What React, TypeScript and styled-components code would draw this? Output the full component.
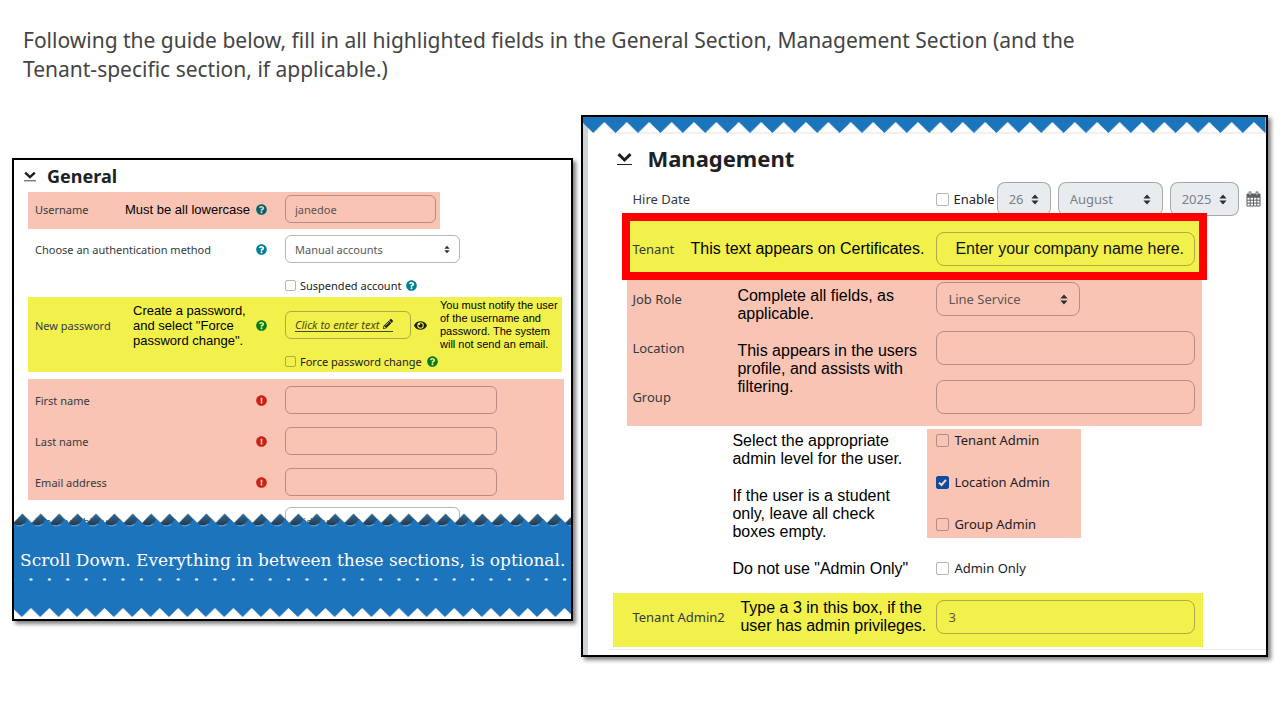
import React, { useId } from "react";
import styled, { createGlobalStyle, css } from "styled-components";
import {
  FaExclamationCircle,
  FaEye,
  FaPencilAlt,
  FaQuestionCircle,
} from "react-icons/fa";

const color = {
  salmon: "#f9c4b3",
  yellow: "#f2f04b",
  red: "#ff0000",
  blue: "#1c74bd",
  ink: "#1d2125",
  label: "#343a40",
  outline: "rgba(50, 40, 60, 0.35)",
  stripe: "#ced4d8",
};

const GlobalStyle = createGlobalStyle`
  * { box-sizing: border-box; }
  body {
    margin: 0;
    background: #fff;
    font-family: "Noto Sans", "Open Sans", sans-serif;
    color: ${color.label};
  }
  h1, h2, p { margin: 0; }
  input, select, button { font: inherit; color: inherit; }
`;

const Page = styled.main`
  padding: 26px 12px 24px;
`;

const Intro = styled.h1`
  padding-left: 11px;
  max-width: 1100px;
  font-size: 21px;
  font-weight: 400;
  line-height: 29px;
  color: #444;
`;

const Panels = styled.div`
  display: flex;
  align-items: flex-start;
  gap: 8px;
  margin-top: 31px;
`;

const Panel = styled.section<{ $grow: number; $drop?: number; $size: number }>`
  flex: ${(p) => p.$grow} 1 0;
  min-width: 0;
  margin-top: ${(p) => p.$drop ?? 0}px;
  border: 2px solid #000;
  background: #fff;
  box-shadow: 3px 3px 4px rgba(0, 0, 0, 0.5);
  font-size: ${(p) => p.$size}px;
`;

const StripedBody = styled.div`
  border-left: 5px solid ${color.stripe};
  padding-bottom: 5px;
`;

const Heading = styled.h2<{ $large?: boolean }>`
  display: flex;
  align-items: center;
  gap: ${(p) => (p.$large ? 15 : 11)}px;
  height: ${(p) => (p.$large ? 48 : 32)}px;
  padding-left: ${(p) => (p.$large ? 29 : 10)}px;
  font-size: ${(p) => (p.$large ? 22 : 18)}px;
  font-weight: 700;
  color: ${color.ink};
`;

const Band = styled.div<{ $fill?: string; $right?: number }>`
  margin-left: 14px;
  margin-right: ${(p) => p.$right ?? 7}px;
  padding-left: 7px;
  background: ${(p) => p.$fill ?? "transparent"};
`;

const UserBand = styled(Band)`
  padding-top: 3px;
  padding-bottom: 6px;
`;

const AuthBand = styled(Band)`
  padding-top: 6px;
  padding-bottom: 3px;
  display: grid;
  gap: 13px;
`;

const NamesBand = styled(Band)`
  display: grid;
  gap: 13px;
  margin-top: 7px;
  padding-top: 7px;
  padding-bottom: 4px;
`;

const PasswordBand = styled(Band)`
  padding-top: 1px;
  padding-bottom: 2px;
`;

const CutBand = styled(Band)`
  height: 23px;
  padding-top: 7px;
`;

const Row = styled.div<{ $height?: number }>`
  display: grid;
  grid-template-columns: 98px 117px 17px 18px 1fr;
  align-items: center;
  height: ${(p) => p.$height ?? 28}px;
`;

const Label = styled.label<{ $wide?: boolean }>`
  grid-column: 1 / ${(p) => (p.$wide ? 3 : 2)};
  white-space: nowrap;
`;

const Note = styled.p<{ $small?: boolean; $end?: boolean }>`
  font-family: "Liberation Sans", Arial, sans-serif;
  font-size: ${(p) => (p.$small ? 11 : 13)}px;
  line-height: ${(p) => (p.$small ? 13 : 15)}px;
  color: #000;
  white-space: nowrap;
  ${(p) =>
    p.$end &&
    css`
      grid-column: 2;
      justify-self: end;
    `}
`;

const Status = styled.span<{ $tone: string }>`
  grid-column: 3;
  justify-self: end;
  display: flex;
  font-size: 11px;
  color: ${(p) => p.$tone};
`;

const Controls = styled.div<{ $gap?: number }>`
  grid-column: 5;
  display: flex;
  align-items: center;
  gap: ${(p) => p.$gap ?? 0}px;
`;

const TextField = styled.input<{ $width?: number; $tall?: boolean; $note?: boolean }>`
  width: ${(p) => (p.$width ? `${p.$width}px` : "100%")};
  height: ${(p) => (p.$tall ? 34 : 28)}px;
  padding: 0 ${(p) => (p.$tall ? 11 : 9)}px;
  border: 1px solid ${color.outline};
  border-radius: ${(p) => (p.$tall ? 8 : 6)}px;
  background: transparent;
  color: #5a5553;
  outline: none;
  ${(p) =>
    p.$note &&
    css`
      padding: 0 10px;
      font-family: "Liberation Sans", Arial, sans-serif;
      font-size: 16px;
      color: #111;
      text-align: right;
    `}
`;

const SelectWrap = styled.span<{ $width: number; $tall?: boolean; $disabled?: boolean }>`
  display: flex;
  align-items: center;
  flex: none;
  position: relative;
  width: ${(p) => p.$width}px;
  height: ${(p) => (p.$tall ? 34 : 28)}px;
  border: 1px solid ${color.outline};
  border-radius: ${(p) => (p.$tall ? 8 : 6)}px;
  background: ${(p) => (p.$disabled ? "#e9ecef" : "transparent")};
  select {
    appearance: none;
    width: 100%;
    height: 100%;
    padding: 0 0 0 ${(p) => (p.$tall ? 11 : 9)}px;
    border: 0;
    background: transparent;
    opacity: 1;
    color: ${(p) => (p.$disabled ? "#7a8087" : "#5a5759")};
    outline: none;
  }
  svg {
    position: absolute;
    right: ${(p) => (p.$tall ? 11 : 9)}px;
    pointer-events: none;
  }
`;

const CheckLabel = styled.label<{ $gap?: number }>`
  display: flex;
  align-items: center;
  gap: ${(p) => p.$gap ?? 5}px;
  height: 18px;
  white-space: nowrap;
  color: ${color.ink};
`;

const Tick = styled.input<{ $size?: number }>`
  appearance: none;
  flex: none;
  width: ${(p) => p.$size ?? 13}px;
  height: ${(p) => p.$size ?? 13}px;
  margin: 0;
  border: 1px solid ${color.outline};
  border-radius: 2px;
  &:checked {
    border-color: #0f4c9c;
    background: #0f4c9c;
  }
`;

const TickBox = styled.span`
  display: flex;
  position: relative;
  svg {
    position: absolute;
    inset: 0;
    pointer-events: none;
  }
`;

const EnterText = styled.button`
  display: flex;
  align-items: center;
  width: 126px;
  height: 28px;
  padding: 0 9px;
  border: 1px solid ${color.outline};
  border-radius: 6px;
  background: transparent;
  font-style: italic;
  white-space: nowrap;
  color: #4a4a1c;
  span {
    border-bottom: 1px solid #4a4a1c;
    line-height: 13px;
  }
  svg {
    margin-left: 4px;
    font-size: 10px;
    color: #22220a;
  }
`;

const EyeButton = styled.button`
  display: flex;
  width: 29px;
  padding: 0 0 0 3px;
  border: 0;
  background: transparent;
  font-size: 13px;
  color: #1d1d08;
`;

const Banner = styled.div`
  position: relative;
  height: 94px;
  padding-top: 25px;
  background: ${color.blue};
  text-align: center;
  p {
    font-family: "DejaVu Serif", serif;
    font-size: 17px;
    line-height: 24px;
    white-space: nowrap;
    color: #fff;
  }
`;

const BannerEdge = styled.svg<{ $top: number }>`
  position: absolute;
  left: 0;
  top: ${(p) => p.$top}px;
  display: block;
`;

const BannerFoot = styled.div`
  height: 2px;
  background: #fff;
`;

const TopEdge = styled.svg`
  display: block;
`;

const FarRow = styled.div<{ $label?: number }>`
  display: grid;
  grid-template-columns: ${(p) => p.$label ?? 100}px ${(p) => 304 - (p.$label ?? 100)}px 1fr;
  align-items: center;
`;

const HireRow = styled(FarRow)`
  height: 34px;
  padding-left: 44px;
`;

const HireControls = styled.div`
  grid-column: 3;
  display: flex;
  align-items: center;
  gap: 2px;
`;

const DateParts = styled.div`
  display: flex;
  align-items: center;
  gap: 7px;
`;

const TenantRow = styled(FarRow)`
  position: relative;
  height: 67px;
  margin: -3px 59px 0 34px;
  padding: 4px 4px 0 2px;
  border: 8px solid ${color.red};
  background: ${color.yellow};
`;

const JobBand = styled.div`
  display: grid;
  grid-template-columns: 105px 199px 1fr;
  grid-template-rows: repeat(3, 34px);
  row-gap: 15px;
  align-items: center;
  margin: 0 64px 0 39px;
  padding: 2px 7px 12px 5px;
  background: ${color.salmon};
`;

const FarNotes = styled.div<{ $top?: number }>`
  display: grid;
  align-content: start;
  align-self: start;
  gap: 19px;
  padding-top: ${(p) => p.$top ?? 0}px;
`;

const JobNotes = styled(FarNotes)`
  grid-area: 1 / 2 / 4 / 3;
`;

const FarNote = styled.p<{ $end?: boolean }>`
  font-family: "Liberation Sans", Arial, sans-serif;
  font-size: 16px;
  line-height: 18px;
  white-space: nowrap;
  color: #000;
  ${(p) =>
    p.$end &&
    css`
      justify-self: end;
      padding-right: 12px;
    `}
`;

const AdminArea = styled.div`
  display: grid;
  grid-template-columns: 195px 1fr;
  height: 167px;
  padding-left: 144px;
`;

const AdminBand = styled.div`
  display: grid;
  align-content: start;
  gap: 24px;
  width: 154px;
  height: 109px;
  margin-top: 3px;
  padding: 2px 9px;
  background: ${color.salmon};
`;

const AdminOnly = styled.div`
  padding: 21px 9px 0;
`;

const Tenant2Row = styled(FarRow)`
  height: 54px;
  margin: 0 63px 0 25px;
  padding: 0 8px 6px 19px;
  background: ${color.yellow};
`;

const EndRule = styled.div`
  height: 1px;
  margin: 2px 0 0 21px;
  background: #e9eaec;
`;

const Chevron = ({ size }: { size: number }) => (
  <svg width={size} height={size} viewBox="0 0 16 16" aria-hidden="true">
    <path d="M1.6 3.4 8 9.6l6.4-6.2" fill="none" stroke="#1d2125" strokeWidth="3.2" />
    <path d="M0 14.4h16" stroke="#1d2125" strokeWidth="1.1" />
  </svg>
);

const Arrows = ({ size }: { size: number }) => (
  <svg width={size} height={size + 3} viewBox="0 0 8 11" aria-hidden="true">
    <path d="M4 0.6 7.6 4.6H.4ZM4 10.4 7.6 6.4H.4Z" fill="#2b3035" />
  </svg>
);

const Calendar = () => (
  <svg width="15" height="16" viewBox="0 0 15 16" aria-label="Calendar">
    <path d="M1 3h13v12H1zM1 6.3h13M1 9.2h13M1 12.1h13M4.2 6v9M7.5 6v9M10.8 6v9" fill="none" stroke="#5d6166" />
    <path d="M1 3h13v3H1z" fill="#5d6166" />
    <path d="M4 .6v4M11 .6v4" stroke="#5d6166" strokeWidth="2.6" />
    <path d="M4 1.4v2.4M11 1.4v2.4" stroke="#fff" />
  </svg>
);

const Help = ({ tone = "#008196" }: { tone?: string }) => (
  <Status $tone={tone}>
    <FaQuestionCircle aria-label="Help" />
  </Status>
);

function Select(props: {
  id?: string;
  name: string;
  value: string;
  width: number;
  tall?: boolean;
  disabled?: boolean;
}) {
  return (
    <SelectWrap $width={props.width} $tall={props.tall} $disabled={props.disabled}>
      <select id={props.id} aria-label={props.name} disabled={props.disabled}>
        <option>{props.value}</option>
      </select>
      <Arrows size={props.tall ? 8 : 6} />
    </SelectWrap>
  );
}

function Check(props: { text: string; size?: number; gap?: number; checked?: boolean }) {
  return (
    <CheckLabel $gap={props.gap}>
      <TickBox>
        <Tick type="checkbox" $size={props.size} defaultChecked={props.checked} />
        {props.checked && (
          <svg width="13" height="13" viewBox="0 0 13 13" aria-hidden="true">
            <path d="M3 6.6 5.5 9 10 3.9" fill="none" stroke="#f9d9cf" strokeWidth="2" />
          </svg>
        )}
      </TickBox>
      {props.text}
    </CheckLabel>
  );
}

function RequiredField({ text }: { text: string }) {
  const id = useId();
  return (
    <Row>
      <Label htmlFor={id}>{text}</Label>
      <Status $tone="#ca2116">
        <FaExclamationCircle aria-label="Required" />
      </Status>
      <Controls>
        <TextField id={id} $width={212} />
      </Controls>
    </Row>
  );
}

function GeneralPanel() {
  return (
    <Panel $grow={561} $drop={43} $size={11}>
      <Heading>
        <Chevron size={12} />
        General
      </Heading>
      <UserBand $fill={color.salmon} $right={131}>
        <Row>
          <Label htmlFor="username">Username</Label>
          <Note $end>Must be all lowercase</Note>
          <Help tone="#00656f" />
          <Controls>
            <TextField id="username" defaultValue="janedoe" $width={151} />
          </Controls>
        </Row>
      </UserBand>
      <AuthBand>
        <Row>
          <Label htmlFor="auth" $wide>
            Choose an authentication method
          </Label>
          <Help />
          <Controls>
            <Select id="auth" name="Choose an authentication method" value="Manual accounts" width={175} />
          </Controls>
        </Row>
        <Row $height={18}>
          <Controls $gap={5}>
            <Check text="Suspended account" size={11} gap={4} />
            <Help />
          </Controls>
        </Row>
      </AuthBand>
      <PasswordBand $fill={color.yellow} $right={9}>
        <Row $height={54}>
          <Label as="span">New password</Label>
          <Note>
            Create a password,
            <br />
            and select "Force
            <br />
            password change".
          </Note>
          <Help tone="#007a2c" />
          <Controls>
            <EnterText type="button">
              <span>
                Click to enter text
                <FaPencilAlt aria-hidden="true" />
              </span>
            </EnterText>
            <EyeButton type="button" aria-label="Reveal">
              <FaEye />
            </EyeButton>
            <Note $small>
              You must notify the user
              <br />
              of the username and
              <br />
              password. The system
              <br />
              will not send an email.
            </Note>
          </Controls>
        </Row>
        <Row $height={18}>
          <Controls $gap={5}>
            <Check text="Force password change" size={11} gap={4} />
            <Help tone="#007a2c" />
          </Controls>
        </Row>
      </PasswordBand>
      <NamesBand $fill={color.salmon}>
        <RequiredField text="First name" />
        <RequiredField text="Last name" />
        <RequiredField text="Email address" />
      </NamesBand>
      <CutBand>
        <Row>
          <Label htmlFor="visibility">Email visibility</Label>
          <Controls>
            <Select id="visibility" name="Email visibility" value="Hidden" width={175} />
          </Controls>
        </Row>
      </CutBand>
      <Banner>
        <BannerEdge $top={-10} width="100%" height="14">
          <defs>
            <linearGradient id="fold" x1="0" y1="0" x2="0" y2="1">
              <stop offset="0" stopColor="#2a6c9f" />
              <stop offset="0.5" stopColor="#29506f" />
              <stop offset="1" stopColor="#22303d" />
            </linearGradient>
            <pattern id="zig" x="-0.8" width="18.4" height="14" patternUnits="userSpaceOnUse">
              <path d="M0 10 9.2 .4 18.4 10V14H0Z" fill="url(#fold)" />
              <path
                d="M18.4 10 14.6 6C12.6 7.6 11.5 11.6 6.5 12.2 3.6 12.5 2 11.6 0 9.8V14H18.4Z"
                fill={color.blue}
              />
              <path d="M11 11.2C9 13 6 13.4 3.4 12.6" fill="none" stroke="#a9c4da" strokeOpacity="0.6" />
            </pattern>
          </defs>
          <rect width="100%" height="14" fill="url(#zig)" />
        </BannerEdge>
        <p>Scroll Down. Everything in between these sections, is optional.</p>
        <BannerEdge $top={55} width="100%" height="3">
          <defs>
            <pattern id="dots" x="7.8" width="18.4" height="3" patternUnits="userSpaceOnUse">
              <ellipse cx="9.2" cy="1.5" rx="1.6" ry="1.2" fill="#e6f0f8" />
            </pattern>
          </defs>
          <rect width="100%" height="3" fill="url(#dots)" />
        </BannerEdge>
        <BannerEdge $top={85} width="100%" height="9">
          <defs>
            <pattern id="foot" x="7.8" width="18.4" height="9" patternUnits="userSpaceOnUse">
              <path d="M0 9 9.2 0 18.4 9Z" fill="#fff" />
            </pattern>
          </defs>
          <rect width="100%" height="9" fill="url(#foot)" />
        </BannerEdge>
      </Banner>
      <BannerFoot />
    </Panel>
  );
}

function ManagementPanel() {
  return (
    <Panel $grow={687} $size={13}>
      <TopEdge width="100%" height="17">
        <defs>
          <pattern id="teeth" x="-1" width="22.4" height="17" patternUnits="userSpaceOnUse">
            <path d="M0 0H22.4V5L11.2 16 0 5Z" fill={color.blue} />
          </pattern>
        </defs>
        <rect y="7" width="5" height="10" fill={color.stripe} />
        <rect x="26" y="15" width="100%" height="2" fill="#f1f1f1" />
        <rect width="100%" height="17" fill="url(#teeth)" />
      </TopEdge>
      <StripedBody>
        <Heading $large>
          <Chevron size={15} />
          Management
        </Heading>
        <HireRow>
          <span>Hire Date</span>
          <HireControls>
            <Check text="Enable" gap={4} />
            <DateParts>
              <Select name="Day" value="26" width={54} tall disabled />
              <Select name="Month" value="August" width={105} tall disabled />
              <Select name="Year" value="2025" width={69} tall disabled />
              <Calendar />
            </DateParts>
          </HireControls>
        </HireRow>
        <TenantRow $label={50}>
          <label htmlFor="tenant">Tenant</label>
          <FarNote $end>This text appears on Certificates.</FarNote>
          <TextField id="tenant" $tall $note defaultValue="Enter your company name here." />
        </TenantRow>
        <JobBand>
          <label htmlFor="job">Job Role</label>
          <JobNotes $top={5}>
            <FarNote>
              Complete all fields, as
              <br />
              applicable.
            </FarNote>
            <FarNote>
              This appears in the users
              <br />
              profile, and assists with
              <br />
              filtering.
            </FarNote>
          </JobNotes>
          <Select id="job" name="Job Role" value="Line Service" width={144} tall />
          <label htmlFor="location">Location</label>
          <TextField id="location" $tall />
          <label htmlFor="group">Group</label>
          <TextField id="group" $tall />
        </JobBand>
        <AdminArea>
          <FarNotes $top={6}>
            <FarNote>
              Select the appropriate
              <br />
              admin level for the user.
            </FarNote>
            <FarNote>
              If the user is a student
              <br />
              only, leave all check
              <br />
              boxes empty.
            </FarNote>
            <FarNote>Do not use "Admin Only"</FarNote>
          </FarNotes>
          <div>
            <AdminBand>
              <Check text="Tenant Admin" />
              <Check text="Location Admin" checked />
              <Check text="Group Admin" />
            </AdminBand>
            <AdminOnly>
              <Check text="Admin Only" />
            </AdminOnly>
          </div>
        </AdminArea>
        <Tenant2Row $label={108}>
          <label htmlFor="tenant2">Tenant Admin2</label>
          <FarNote>
            Type a 3 in this box, if the
            <br />
            user has admin privileges.
          </FarNote>
          <TextField id="tenant2" $tall defaultValue="3" />
        </Tenant2Row>
        <EndRule />
      </StripedBody>
    </Panel>
  );
}

export default function App() {
  return (
    <>
      <GlobalStyle />
      <Page>
        <Intro>
          Following the guide below, fill in all highlighted fields in the General Section, Management Section (and the
          Tenant-specific section, if applicable.)
        </Intro>
        <Panels>
          <GeneralPanel />
          <ManagementPanel />
        </Panels>
      </Page>
    </>
  );
}
